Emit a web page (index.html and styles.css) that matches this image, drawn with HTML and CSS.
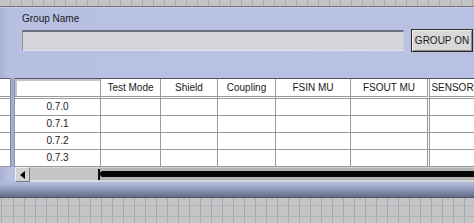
FILE: index.html
```html
<!DOCTYPE html>
<html>
<head>
<meta charset="utf-8">
<link rel="stylesheet" href="styles.css">
</head>
<body>
<div class="top-grid"></div>
<div class="panel">
  <div class="group">
    <div class="label">Group Name</div>
    <div class="group-row">
      <div class="name-input"></div>
      <div class="btn">GROUP ON</div>
    </div>
  </div>
  <div class="table-area">
    <div class="stub">
      <div class="stub-cell head"></div>
      <div class="stub-cell"></div>
      <div class="stub-cell"></div>
      <div class="stub-cell"></div>
      <div class="stub-cell"></div>
    </div>
    <div class="divider"></div>
    <div class="main">
      <div class="grid">
        <div class="cell h c0 corner"></div>
        <div class="cell h">Test Mode</div>
        <div class="cell h">Shield</div>
        <div class="cell h">Coupling</div>
        <div class="cell h">FSIN MU</div>
        <div class="cell h dbl">FSOUT MU</div>
        <div class="cell h">SENSOR</div>

        <div class="cell c0">0.7.0</div><div class="cell"></div><div class="cell"></div><div class="cell"></div><div class="cell"></div><div class="cell dbl"></div><div class="cell"></div>
        <div class="cell c0">0.7.1</div><div class="cell"></div><div class="cell"></div><div class="cell"></div><div class="cell"></div><div class="cell dbl"></div><div class="cell"></div>
        <div class="cell c0">0.7.2</div><div class="cell"></div><div class="cell"></div><div class="cell"></div><div class="cell"></div><div class="cell dbl"></div><div class="cell"></div>
        <div class="cell c0">0.7.3</div><div class="cell"></div><div class="cell"></div><div class="cell"></div><div class="cell"></div><div class="cell dbl"></div><div class="cell"></div>
      </div>
      <div class="hscroll">
        <div class="arrow-btn"><span class="arrow"></span></div>
        <div class="track"></div>
        <div class="thumb"><span class="tick"></span><span class="bar"></span></div>
      </div>
    </div>
  </div>
  <div class="panel-bottom"></div>
</div>
<div class="bottom-grid"></div>
</body>
</html>
```

FILE: styles.css
```css
html, body {
  margin: 0;
  padding: 0;
}
body {
  width: 474px;
  height: 223px;
  overflow: hidden;
  font-family: "Liberation Sans", Arial, sans-serif;
  font-size: 10px;
  color: #1a1a1a;
  background: #c3c3c6;
}
.top-grid, .bottom-grid {
  background-color: #c4c4c7;
  background-image:
    repeating-linear-gradient(90deg, transparent 0 10px, #a9a9ad 10px 11px),
    repeating-linear-gradient(0deg, transparent 0 10px, #b4b4b8 10px 11px);
}
.top-grid {
  height: 6px;
  border-bottom: 1px solid #707078;
}
.bottom-grid {
  height: 25px;
  background-position: 3px 4px;
}
.panel {
  background: linear-gradient(90deg, #aab2d4 0, #b8c0e2 8px, #b8c1e2 100%);
}
.group {
  height: 71px;
  padding-left: 22px;
  box-sizing: border-box;
  padding-top: 5px;
  border-top: 1px solid #c8cff0;
}
.label {
  height: 12px;
  line-height: 12px;
  margin-bottom: 4px;
  color: #202020;
}
.group-row {
  display: flex;
  align-items: flex-start;
}
.name-input {
  width: 382px;
  height: 21px;
  margin-top: 1px;
  box-sizing: border-box;
  background: #d6d5da;
  border-top: 2px solid #6e7084;
  border-left: 1px solid #8a8ca0;
  border-bottom: 1px solid #dde2f6;
  border-right: 1px solid #c9cde4;
}
.btn {
  margin-left: 7px;
  width: 62px;
  height: 23px;
  box-sizing: border-box;
  border: 1px solid #2a2a2a;
  background: #d8d8d8;
  box-shadow: inset 1px 1px 0 #f4f4f4, inset -1px -1px 0 #8c8c8c;
  text-align: center;
  line-height: 21px;
  color: #202020;
}
.table-area {
  display: flex;
  height: 104px;
}
.stub {
  width: 10px;
  height: 89px;
  border-top: 1px solid #606070;
  box-sizing: border-box;
  background: #fff;
}
.stub-cell {
  height: 16px;
  border-bottom: 1px solid #9a9a9a;
}
.stub-cell.head {
  height: 17px;
  border-bottom: 3px double #9a9a9a;
}
.divider {
  width: 5px;
  height: 89px;
  box-sizing: border-box;
  background: #a5adcf;
  border-left: 1px solid #7c82a0;
  border-right: 1px solid #8a90b0;
}
.main {
  width: 459px;
  overflow: hidden;
}
.grid {
  display: grid;
  grid-template-columns: 86px 60px 57px 58px 75px 79px 46px;
  grid-template-rows: 20px repeat(4, 17px);
  width: 461px;
  border-top: 1px solid #505060;
  background: #fff;
}
.cell {
  box-sizing: border-box;
  border-right: 1px solid #9a9a9a;
  border-bottom: 1px solid #9a9a9a;
  text-align: center;
  line-height: 16px;
  color: #1a1a1a;
  white-space: nowrap;
  overflow: hidden;
}
.cell.h {
  border-bottom: 3px double #9a9a9a;
  line-height: 18px;
}
.cell.dbl {
  border-right: 3px double #9a9a9a;
}
.corner {
  box-shadow: inset 2px 2px 0 #c4c4cc;
}
.hscroll {
  display: flex;
  height: 15px;
}
.arrow-btn {
  width: 15px;
  height: 15px;
  box-sizing: border-box;
  background: #d2d2d2;
  border-top: 1px solid #f0f0f0;
  border-left: 1px solid #f0f0f0;
  border-right: 1px solid #7a7a7a;
  border-bottom: 1px solid #7a7a7a;
  display: flex;
  align-items: center;
  justify-content: center;
}
.arrow {
  width: 0;
  height: 0;
  border-top: 4px solid transparent;
  border-bottom: 4px solid transparent;
  border-right: 5px solid #000;
  margin-left: -1px;
}
.track {
  width: 68px;
  height: 15px;
  box-sizing: border-box;
  background: #c4c4c4;
  border-top: 1px solid #d8d8d8;
  border-bottom: 2px solid #e0e0e0;
}
.thumb {
  flex: 1;
  height: 15px;
  box-sizing: border-box;
  background: #b4b4b4;
  border-top: 1px solid #d0d0d0;
  border-bottom: 2px solid #d4d4d4;
  display: flex;
  align-items: center;
}
.tick {
  width: 2px;
  height: 11px;
  background: #111;
}
.bar {
  flex: 1;
  height: 6px;
  background: #050505;
  border-top-left-radius: 3px 3px;
  border-bottom-left-radius: 3px 3px;
}
.panel-bottom {
  height: 16px;
  box-sizing: border-box;
  background: linear-gradient(180deg, #b6bee0 0, #a3abcd 4px, #8088a8 10px, #676c86 15px);
  border-bottom: 1px solid #50546a;
}
```
